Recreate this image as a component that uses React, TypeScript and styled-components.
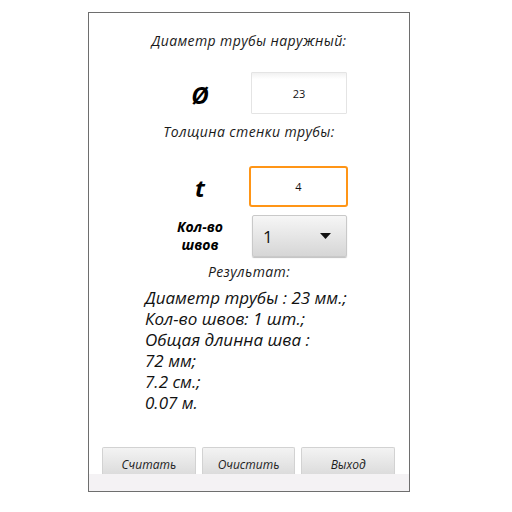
import styled, { createGlobalStyle } from "styled-components";

const GlobalStyle = createGlobalStyle`
  html, body {
    margin: 0;
    padding: 0;
    background: #fff;
  }
  * {
    box-sizing: border-box;
  }
`;

const results = [
  "Диаметр трубы : 23 мм.;",
  "Кол-во швов: 1 шт.;",
  "Общая длинна шва :",
  "72 мм;",
  "7.2 см.;",
  "0.07 м.",
];

const App = () => {
  return (
    <Page>
      <GlobalStyle />
      <Frame>
        <Caption>Диаметр трубы наружный:</Caption>
        <Row $top={21}>
          <Symbol>Ø</Symbol>
          <Field>23</Field>
        </Row>
        <Caption $top={8}>Толщина стенки трубы:</Caption>
        <Row $top={23}>
          <Symbol>t</Symbol>
          <Field $focused>4</Field>
        </Row>
        <Row $top={8}>
          <SmallLabel>
            Кол-во
            <br />
            швов
          </SmallLabel>
          <Spinner>
            <span>1</span>
            <Arrow />
          </Spinner>
        </Row>
        <Caption $top={5}>Результат:</Caption>
        <ResultList>
          {results.map((line) => (
            <ResultLine key={line}>{line}</ResultLine>
          ))}
        </ResultList>
        <ButtonBar>
          <ActionButton>Считать</ActionButton>
          <ActionButton>Очистить</ActionButton>
          <ActionButton>Выход</ActionButton>
        </ButtonBar>
        <NavStrip />
      </Frame>
    </Page>
  );
};

const Arrow = () => (
  <svg width="11" height="6" viewBox="0 0 11 6">
    <path d="M0 0 L11 0 L5.5 6 Z" fill="#111" />
  </svg>
);

const Page = styled.div`
  width: 512px;
  height: 512px;
  padding: 12px 0 0 88px;
  font-family: "Open Sans", "Noto Sans", sans-serif;
`;

const Frame = styled.div`
  width: 322px;
  height: 480px;
  border: 1px solid #6e6e6e;
  background: #fff;
  display: flex;
  flex-direction: column;
  padding-top: 18px;
`;

const Caption = styled.div<{ $top?: number }>`
  margin-top: ${({ $top }) => $top ?? 0}px;
  text-align: center;
  font-style: italic;
  font-size: 14px;
  line-height: 20px;
  color: #1a1a1a;
  letter-spacing: 0.4px;
`;

const Row = styled.div<{ $top: number }>`
  margin-top: ${({ $top }) => $top}px;
  display: flex;
  align-items: center;
  padding-left: 61px;
`;

const Symbol = styled.div`
  width: 100px;
  height: 42px;
  text-align: center;
  font-style: italic;
  font-weight: 700;
  font-size: 24px;
  line-height: 38px;
  color: #000;
  padding-top: 4px;
`;

const SmallLabel = styled.div`
  width: 100px;
  text-align: center;
  font-style: italic;
  font-weight: 700;
  font-size: 14px;
  line-height: 18px;
  color: #000;
`;

const Field = styled.div<{ $focused?: boolean }>`
  width: ${({ $focused }) => ($focused ? 99 : 96)}px;
  height: ${({ $focused }) => ($focused ? 41 : 42)}px;
  margin-left: ${({ $focused }) => ($focused ? -1 : 1)}px;
  border: ${({ $focused }) =>
    $focused ? "2px solid #ff9516" : "1px solid #e4e4e4"};
  border-radius: ${({ $focused }) => ($focused ? 3 : 1)}px;
  background: ${({ $focused }) =>
    $focused ? "#fff" : "linear-gradient(#f1f1f1, #fff 6px)"};
  display: flex;
  align-items: center;
  justify-content: center;
  font-size: 11px;
  color: #111;
`;

const Spinner = styled.div`
  width: 95px;
  height: 42px;
  margin-left: 2px;
  border: 1px solid #c9c9c9;
  border-radius: 2px;
  background: linear-gradient(#f6f6f6, #d6d6d6);
  box-shadow: 0 1px 1px rgba(0, 0, 0, 0.25);
  display: flex;
  align-items: center;
  justify-content: space-between;
  padding: 0 15px 0 10px;
  font-size: 17px;
  color: #111;
`;

const ResultList = styled.div`
  margin-top: 5px;
  padding-left: 56px;
`;

const ResultLine = styled.div`
  font-style: italic;
  font-size: 17px;
  line-height: 21px;
  color: #111;
`;

const ButtonBar = styled.div`
  margin-top: auto;
  display: flex;
  gap: 6px;
  padding: 0 14px 0 13px;
`;

const ActionButton = styled.div`
  flex: 1;
  height: 27px;
  border: 1px solid #d2d2d2;
  border-bottom: none;
  border-radius: 2px 2px 0 0;
  background: linear-gradient(#f3f3f3, #dcdcdc);
  display: flex;
  align-items: center;
  justify-content: center;
  font-style: italic;
  font-size: 12px;
  color: #1d1d1d;
  padding-top: 6px;
`;

const NavStrip = styled.div`
  height: 17px;
  background: #f4f2f4;
`;

export default App;
